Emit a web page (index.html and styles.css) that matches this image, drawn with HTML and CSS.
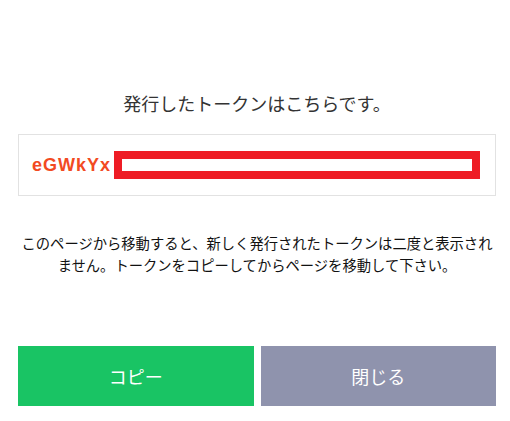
FILE: index.html
```html
<!DOCTYPE html>
<html lang="ja">
<head>
<meta charset="utf-8">
<link rel="stylesheet" href="styles.css">
</head>
<body>
<div class="dialog">
  <h1 class="title">発行したトークンはこちらです。</h1>
  <div class="token-box">
    <span class="token">eGWkYx</span><span class="redact"></span>
  </div>
  <p class="notice">このページから移動すると、新しく発行されたトークンは二度と表示されません。トークンをコピーしてからページを移動して下さい。</p>
  <div class="actions">
    <button class="btn btn-copy">コピー</button>
    <button class="btn btn-close">閉じる</button>
  </div>
</div>
</body>
</html>
```

FILE: styles.css
```css
html, body {
  margin: 0;
  padding: 0;
  background: #ffffff;
}
body {
  font-family: "Noto Sans CJK JP", "Noto Sans", sans-serif;
  width: 510px;
  height: 421px;
  overflow: hidden;
}
.dialog {
  padding: 90px 14px 0 18px;
  display: flex;
  flex-direction: column;
}
.title {
  margin: 0;
  font-size: 18px;
  font-weight: normal;
  line-height: 26px;
  height: 26px;
  color: #333333;
  text-align: center;
}
.token-box {
  margin-top: 18px;
  height: 62px;
  box-sizing: border-box;
  border: 1px solid #e2e2e2;
  display: flex;
  align-items: center;
  padding-left: 13px;
}
.token {
  font-family: "Liberation Sans", Arial, sans-serif;
  font-weight: bold;
  font-size: 18px;
  letter-spacing: 1px;
  color: #f24a22;
}
.redact {
  display: inline-block;
  width: 366px;
  height: 28px;
  box-sizing: border-box;
  border: 8px solid #ee1c25;
  margin-left: 3px;
}
.notice {
  margin: 36px 0 0;
  font-size: 14.3px;
  line-height: 22px;
  color: #111111;
  text-align: center;
}
.actions {
  margin-top: 70px;
  display: flex;
  gap: 7px;
}
.btn {
  flex: 1;
  height: 60px;
  border: none;
  margin: 0;
  padding: 0;
  font-family: "Noto Sans CJK JP", "Noto Sans", sans-serif;
  font-size: 18px;
  color: #ffffff;
  cursor: pointer;
}
.btn-copy {
  background: #19c464;
}
.btn-close {
  background: #8f93ad;
}
```
